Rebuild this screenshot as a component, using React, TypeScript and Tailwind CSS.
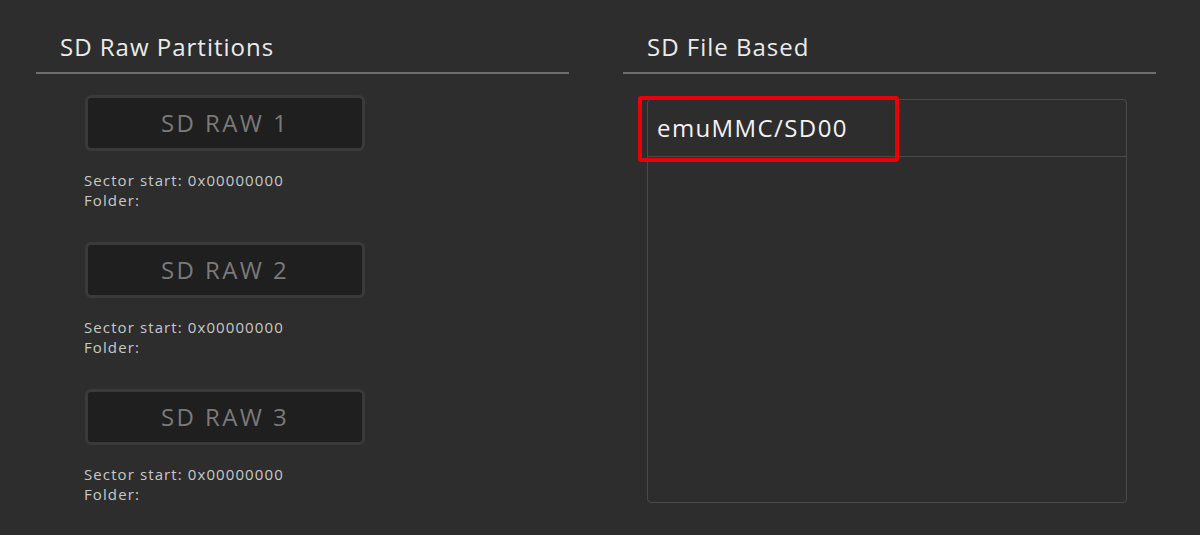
import React from "react";

const font = { fontFamily: '"Open Sans", "Noto Sans", sans-serif' };

function RawEntry({ n }: { n: number }) {
  return (
    <div className="flex flex-col">
      <div className="w-[280px] h-[56px] rounded-[6px] border-[3px] border-[#3a3a3a] bg-[#1f1f1f] flex items-center justify-center text-[24px] leading-[32px] tracking-[2.4px] text-[#7a7a7a]">
        SD RAW {n}
      </div>
      <div className="mt-[19px] -ml-[1px] text-[15px] leading-[20px] text-[#c8c8c8] tracking-[1.1px]">
        <div>Sector start: 0x00000000</div>
        <div>Folder:</div>
      </div>
    </div>
  );
}

export default function App() {
  return (
    <div
      className="w-[1200px] h-[535px] bg-[#2d2d2d] flex pl-[36px] gap-[54px] overflow-hidden"
      style={font}
    >
      <div className="w-[533px] flex flex-col">
        <div className="pt-[31px] pl-[24px] text-[24px] leading-[32px] text-[#ebebeb] tracking-[1px]">
          SD Raw Partitions
        </div>
        <div className="mt-[9px] h-[2px] bg-[#6e6e6e]" />
        <div className="mt-[21px] pl-[49px] flex flex-col gap-[32px]">
          <RawEntry n={1} />
          <RawEntry n={2} />
          <RawEntry n={3} />
        </div>
      </div>
      <div className="w-[533px] flex flex-col">
        <div className="pt-[31px] pl-[24px] text-[24px] leading-[32px] text-[#ebebeb] tracking-[1px]">
          SD File Based
        </div>
        <div className="mt-[9px] h-[2px] bg-[#6e6e6e]" />
        <div className="mt-[25px] ml-[24px] w-[480px] h-[404px] rounded-[4px] border border-[#4a4a4a] relative">
          <div className="h-[57px] border-b border-[#4a4a4a] flex items-center pl-[9px] text-[24px] leading-[32px] tracking-[1.4px] text-[#f2f2f2]">
            emuMMC/SD00
          </div>
          <div className="absolute -left-[10px] -top-[4px] w-[261px] h-[66px] border-[4px] border-[#e8000b] rounded-[3px]" />
        </div>
      </div>
    </div>
  );
}
